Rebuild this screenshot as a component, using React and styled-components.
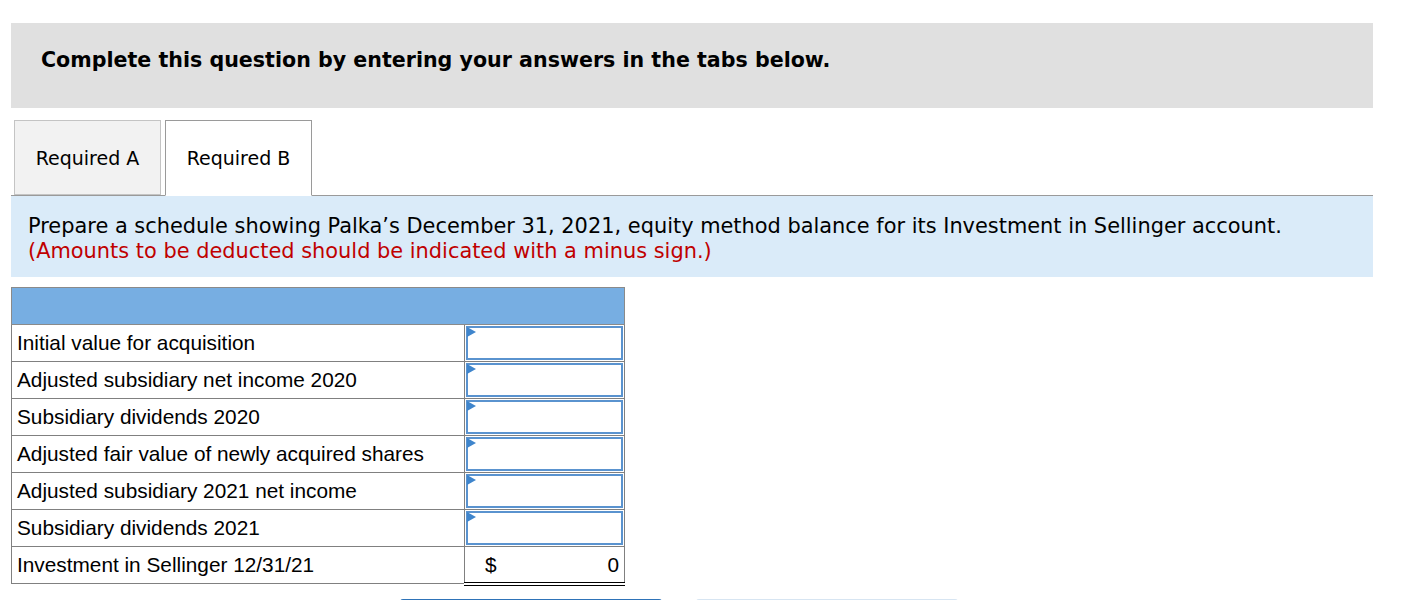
import React from "react";
import styled, { createGlobalStyle } from "styled-components";

const Global = createGlobalStyle`
  html, body { margin: 0; padding: 0; background: #fff; overflow: hidden; }
  body { font-family: "DejaVu Sans", Verdana, sans-serif; color: #000; }
`;

const Page = styled.div`
  padding: 23px 31px 0 11px;
  width: 1362px;
  height: 577px;
  overflow: hidden;
`;

const Banner = styled.div`
  background: #e0e0e0;
  height: 85px;
  display: flex;
  align-items: flex-start;
  padding: 25px 0 0 30px;
  font-weight: bold;
  font-size: 20.6px;
  box-sizing: border-box;
`;

const Tabs = styled.div`
  display: flex;
  align-items: flex-end;
  gap: 4px;
  margin-top: 12px;
  padding-left: 3px;
  border-bottom: 1px solid #9a9a9a;
  height: 75px;
`;

const Tab = styled.div`
  width: 147px;
  box-sizing: border-box;
  display: flex;
  align-items: center;
  justify-content: center;
  font-size: 19px;
  background: ${(p) => (p.$active ? "#fff" : "#f2f2f2")};
  border: 1px solid ${(p) => (p.$active ? "#9a9a9a" : "#c4c4c4")};
  border-bottom: ${(p) => (p.$active ? "1px solid #fff" : "1px solid #c4c4c4")};
  margin-bottom: ${(p) => (p.$active ? "-1px" : "0")};
  height: ${(p) => (p.$active ? "76px" : "75px")};
  padding-top: ${(p) => (p.$active ? "0" : "1px")};
`;

const Info = styled.div`
  background: #daebf9;
  padding: 18px 17px 0;
  height: 81px;
  box-sizing: border-box;
  font-size: 20.9px;
  line-height: 25px;
`;

const Note = styled.div`
  color: #c00000;
`;

const Table = styled.table`
  margin-top: 10px;
  border-collapse: collapse;
  table-layout: fixed;
  width: 613px;
  font-family: "Liberation Sans", Arial, sans-serif;
  font-size: 20.8px;
`;

const HeadCell = styled.td`
  background: #77aee2;
  border: 1px solid #8a8a8a;
  height: 36px;
  padding: 0;
`;

const Row = styled.tr`
  height: 37px;
`;

const Label = styled.td`
  border: 1px solid #808080;
  padding: 0 0 0 5px;
  box-sizing: border-box;
  white-space: nowrap;
`;

const ValueCell = styled.td`
  border: 1px solid #808080;
  padding: 1px;
  box-sizing: border-box;
  vertical-align: middle;
  ${(p) =>
    p.$total &&
    `
    padding: 0 1px;
    border-bottom: 4px double #000;
  `}
`;

const InputBox = styled.div`
  position: relative;
  height: 34px;
  box-sizing: border-box;
  border: 2px solid #5a93cf;
  background: #fff;
`;

const Marker = styled.span`
  position: absolute;
  left: -1px;
  top: -1px;
  width: 0;
  height: 0;
  border-top: 5px solid transparent;
  border-bottom: 5px solid transparent;
  border-left: 9px solid #3f85cc;
`;

const Total = styled.div`
  display: flex;
  justify-content: space-between;
  align-items: center;
  height: 30px;
  padding: 2px 4px 0 19px;
  box-sizing: border-box;
  font-size: 20.8px;
`;

const Buttons = styled.div`
  display: flex;
  gap: 34px;
  margin-top: 13px;
  padding-left: 389px;
`;

const NavButton = styled.div`
  width: 262px;
  height: 40px;
  border-radius: 3px 3px 0 0;
  border-top: 2px solid ${(p) => (p.$primary ? "#2e73b8" : "#d7e5f2")};
  background: #fff;
`;

const rows = [
  "Initial value for acquisition",
  "Adjusted subsidiary net income 2020",
  "Subsidiary dividends 2020",
  "Adjusted fair value of newly acquired shares",
  "Adjusted subsidiary 2021 net income",
  "Subsidiary dividends 2021",
];

export default function App() {
  return (
    <>
      <Global />
      <Page>
        <Banner>Complete this question by entering your answers in the tabs below.</Banner>
        <Tabs>
          <Tab>Required A</Tab>
          <Tab $active>Required B</Tab>
        </Tabs>
        <Info>
          <div>
            Prepare a schedule showing Palka’s December 31, 2021, equity method balance for its
            Investment in Sellinger account.
          </div>
          <Note>(Amounts to be deducted should be indicated with a minus sign.)</Note>
        </Info>
        <Table>
          <colgroup>
            <col style={{ width: 453 }} />
            <col style={{ width: 160 }} />
          </colgroup>
          <tbody>
            <tr>
              <HeadCell colSpan={2} />
            </tr>
            {rows.map((r) => (
              <Row key={r}>
                <Label>{r}</Label>
                <ValueCell>
                  <InputBox>
                    <Marker />
                  </InputBox>
                </ValueCell>
              </Row>
            ))}
            <Row>
              <Label>Investment in Sellinger 12/31/21</Label>
              <ValueCell $total>
                <Total>
                  <span>$</span>
                  <span>0</span>
                </Total>
              </ValueCell>
            </Row>
          </tbody>
        </Table>
        <Buttons>
          <NavButton $primary />
          <NavButton />
        </Buttons>
      </Page>
    </>
  );
}
